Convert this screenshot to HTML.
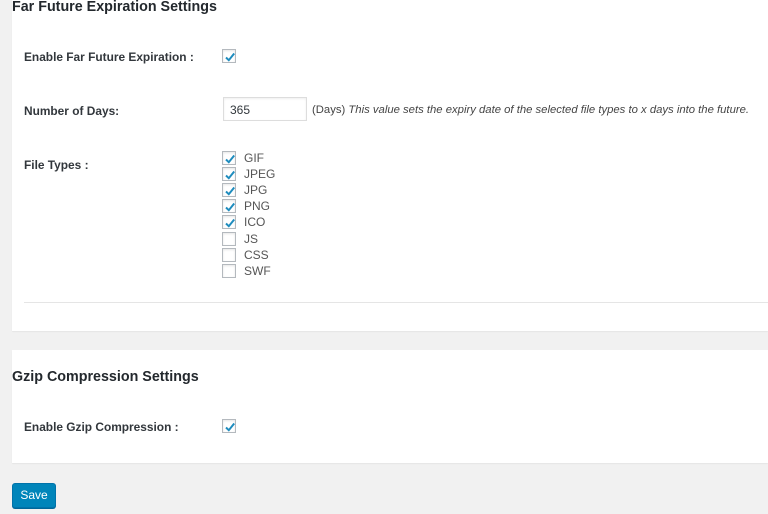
<!DOCTYPE html>
<html><head><style>
body{margin:0;width:768px;height:514px;background:#f1f1f1;font-family:"Liberation Sans",sans-serif;color:#23282d;position:relative;overflow:hidden}
.p{position:absolute;left:12px;right:0;background:#fff;box-shadow:0 1px 1px rgba(0,0,0,.05)}
.a{position:absolute;font-size:13px;white-space:nowrap}
h2{position:absolute;margin:0;font-size:14.3px;font-weight:bold;color:#23282d;white-space:nowrap}
.lb{font-weight:bold;color:#32373c;font-size:11.9px}
.cb{position:absolute;width:14px;height:14px;border:1px solid #b4b9be;background:#fff;box-sizing:border-box;box-shadow:inset 0 1px 2px rgba(0,0,0,.1)}
.cb svg{position:absolute;left:1px;top:1px}
.ft{position:absolute;left:244px;font-size:12px;color:#555}
</style></head><body>
<div class="p" style="top:0;height:331px"></div>
<div class="p" style="top:350px;height:113px"></div>
<h2 style="left:12px;top:-1px">Far Future Expiration Settings</h2>
<div class="a lb" style="left:24px;top:50px">Enable Far Future Expiration :</div>
<div class="cb" style="left:222px;top:49px"><svg width="12" height="12" viewBox="0 0 12 12"><path d="M2 6.5L4.8 9.2 10.2 2.5" stroke="#1e8cbe" stroke-width="2" fill="none"/></svg></div>
<div class="a lb" style="left:24px;top:104px">Number of Days:</div>
<div style="position:absolute;left:223px;top:97px;width:84px;height:24px;border:1px solid #ddd;box-sizing:border-box;box-shadow:inset 0 1px 2px rgba(0,0,0,.07);font-size:12px;color:#32373c;padding:5px 0 0 6px">365</div>
<div class="a" style="left:312px;top:104px;font-size:11.3px;color:#444">(Days) <i>This value sets the expiry date of the selected file types to x days into the future.</i></div>
<div class="a lb" style="left:24px;top:158px">File Types :</div>
<div class="cb" style="left:222px;top:151px"><svg width="12" height="12"><path d="M2 6.5L4.8 9.2 10.2 2.5" stroke="#1e8cbe" stroke-width="2" fill="none"/></svg></div><div class="ft" style="top:151px">GIF</div>
<div class="cb" style="left:222px;top:167px"><svg width="12" height="12"><path d="M2 6.5L4.8 9.2 10.2 2.5" stroke="#1e8cbe" stroke-width="2" fill="none"/></svg></div><div class="ft" style="top:167px">JPEG</div>
<div class="cb" style="left:222px;top:183px"><svg width="12" height="12"><path d="M2 6.5L4.8 9.2 10.2 2.5" stroke="#1e8cbe" stroke-width="2" fill="none"/></svg></div><div class="ft" style="top:183px">JPG</div>
<div class="cb" style="left:222px;top:199px"><svg width="12" height="12"><path d="M2 6.5L4.8 9.2 10.2 2.5" stroke="#1e8cbe" stroke-width="2" fill="none"/></svg></div><div class="ft" style="top:199px">PNG</div>
<div class="cb" style="left:222px;top:215px"><svg width="12" height="12"><path d="M2 6.5L4.8 9.2 10.2 2.5" stroke="#1e8cbe" stroke-width="2" fill="none"/></svg></div><div class="ft" style="top:215px">ICO</div>
<div class="cb" style="left:222px;top:232px"></div><div class="ft" style="top:232px">JS</div>
<div class="cb" style="left:222px;top:248px"></div><div class="ft" style="top:248px">CSS</div>
<div class="cb" style="left:222px;top:264px"></div><div class="ft" style="top:264px">SWF</div>
<div style="position:absolute;left:24px;right:0;top:302px;height:1px;background:#e5e5e5"></div>
<h2 style="left:12px;top:369px">Gzip Compression Settings</h2>
<div class="a lb" style="left:24px;top:420px">Enable Gzip Compression :</div>
<div class="cb" style="left:222px;top:419px"><svg width="12" height="12"><path d="M2 6.5L4.8 9.2 10.2 2.5" stroke="#1e8cbe" stroke-width="2" fill="none"/></svg></div>
<div style="position:absolute;left:12px;top:483px;width:44px;height:25px;background:#0085ba;border:1px solid #0073aa;box-sizing:border-box;border-radius:3px;color:#fff;font-size:12px;text-align:center;line-height:23px;box-shadow:0 1px 0 #006799">Save</div>
</body></html>
